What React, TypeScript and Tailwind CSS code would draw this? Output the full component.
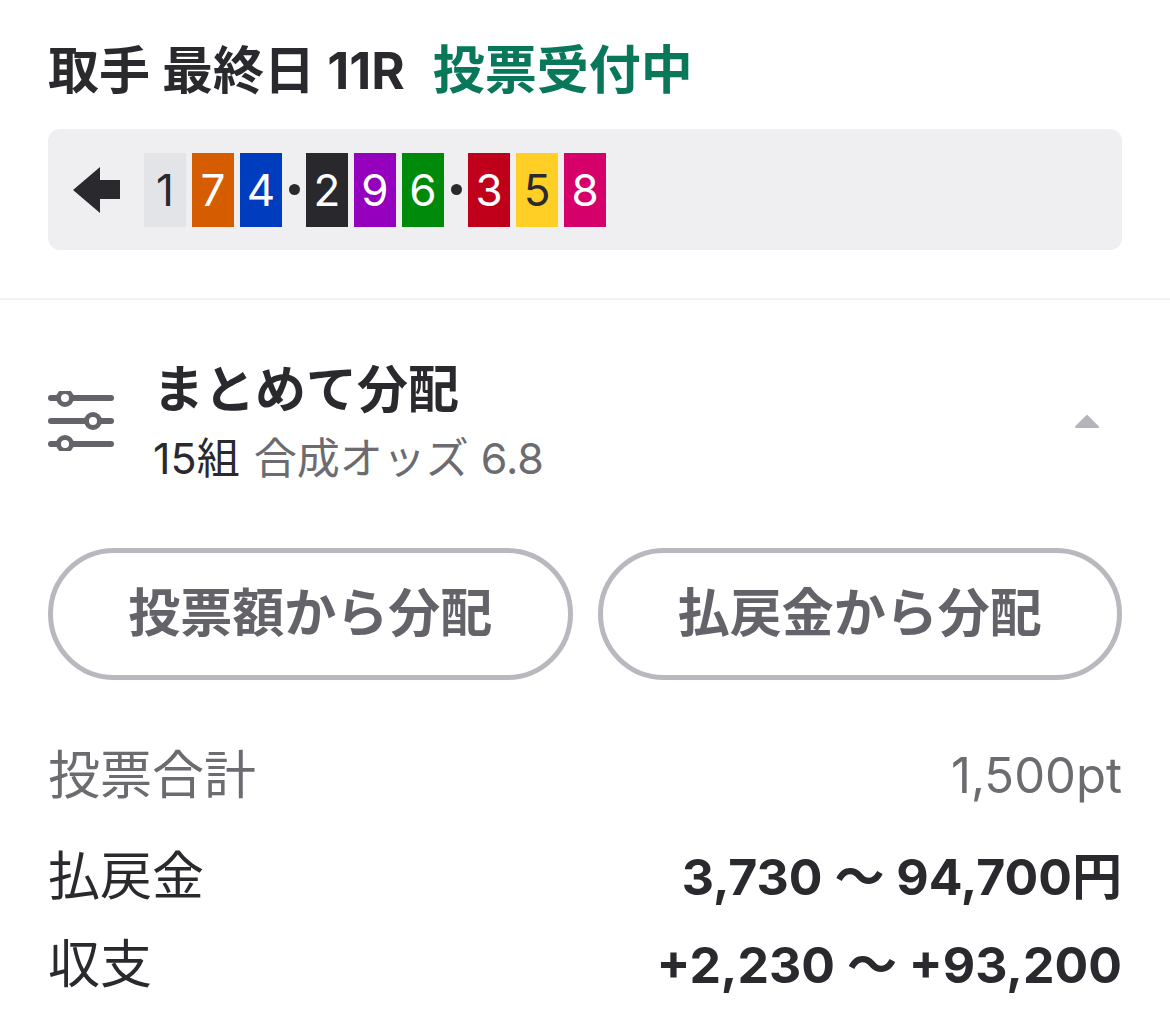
import React from 'react';

type Horse = { n: number; bg: string; fg: string };

const groups: Horse[][] = [
  [
    { n: 1, bg: 'bg-[#e3e4e8]', fg: 'text-[#2a2a2e]' },
    { n: 7, bg: 'bg-[#d65c00]', fg: 'text-white' },
    { n: 4, bg: 'bg-[#003cbe]', fg: 'text-white' },
  ],
  [
    { n: 2, bg: 'bg-[#29292d]', fg: 'text-white' },
    { n: 9, bg: 'bg-[#9400bd]', fg: 'text-white' },
    { n: 6, bg: 'bg-[#008a0b]', fg: 'text-white' },
  ],
  [
    { n: 3, bg: 'bg-[#c0001a]', fg: 'text-white' },
    { n: 5, bg: 'bg-[#ffcf26]', fg: 'text-[#2a2a2e]' },
    { n: 8, bg: 'bg-[#d6006a]', fg: 'text-white' },
  ],
];

function SlidersIcon() {
  return (
    <svg width="66" height="60" viewBox="0 0 66 60" className="shrink-0">
      <g stroke="#636369" strokeWidth="6" strokeLinecap="round" fill="none">
        <line x1="3" y1="7" x2="63" y2="7" />
        <line x1="3" y1="30" x2="63" y2="30" />
        <line x1="3" y1="53" x2="63" y2="53" />
      </g>
      <g stroke="#636369" strokeWidth="5" fill="#fff">
        <circle cx="17" cy="7" r="6.5" />
        <circle cx="45" cy="30" r="6.5" />
        <circle cx="17" cy="53" r="6.5" />
      </g>
    </svg>
  );
}

export default function App() {
  const font = { fontFamily: 'Inter, "Noto Sans CJK JP", sans-serif' };
  return (
    <div className="w-[1170px] min-h-[1025px] bg-white text-[#2a2a2e]" style={font}>
      {/* Race header */}
      <div className="px-[48px] pt-[39px]">
        <div className="flex items-center font-bold leading-[64px]">
          <span className="text-[51px]">取手 最終日 11R</span>
          <span className="ml-[28px] text-[52px] text-[#08775a]">投票受付中</span>
        </div>

        <div className="mt-[26px] h-[121px] rounded-[12px] bg-[#efeff2] px-[25px] flex items-center">
          <svg width="47" height="46" viewBox="0 0 47 46" className="shrink-0">
            <path d="M0 23 L27 0 L27 13 L47 13 L47 32 L27 32 L27 46 Z" fill="#2a2a2e" />
          </svg>
          <div className="ml-[24px] flex items-center">
            {groups.map((g, gi) => (
              <React.Fragment key={gi}>
                {gi > 0 && (
                  <div className="w-[24px] flex items-center justify-center">
                    <span className="w-[11px] h-[11px] rounded-full bg-[#2a2a2e]" />
                  </div>
                )}
                <div className="flex gap-[6px]">
                  {g.map(h => (
                    <div
                      key={h.n}
                      className={`w-[42px] h-[74px] flex items-center justify-center text-[44px] font-normal ${h.bg} ${h.fg}`}
                    >
                      {h.n}
                    </div>
                  ))}
                </div>
              </React.Fragment>
            ))}
          </div>
        </div>
      </div>

      <div className="mt-[48px] h-[2px] bg-[#f2f2f4]" />

      {/* Distribution section */}
      <div className="px-[48px] pt-[58px]">
        <div className="flex items-center">
          <SlidersIcon />
          <div className="ml-[39px] flex-1">
            <div className="text-[51px] font-bold leading-[64px]">まとめて分配</div>
            <div className="mt-[10px] text-[43px] leading-[52px]">
              <span>15組</span>
              <span className="ml-[14px] text-[#6b6b70]">合成オッズ 6.8</span>
            </div>
          </div>
          <svg width="26" height="14" viewBox="0 0 26 14" className="mr-[22px] mt-[2px]">
            <path d="M13 1 L24 12 L2 12 Z" fill="#b4b5bb" stroke="#b4b5bb" strokeWidth="2" strokeLinejoin="round" />
          </svg>
        </div>

        <div className="mt-[64px] grid grid-cols-2 gap-[25px]">
          <button className="h-[132px] rounded-full border-[5px] border-[#b8b9bf] bg-white text-[52px] font-bold text-[#636369]">
            投票額から分配
          </button>
          <button className="h-[132px] rounded-full border-[5px] border-[#b8b9bf] bg-white text-[52px] font-bold text-[#636369]">
            払戻金から分配
          </button>
        </div>

        <div className="mt-[64px] flex items-center justify-between leading-[64px] text-[#6b6b70]">
          <span className="text-[52px]">投票合計</span>
          <span className="text-[49px]">1,500pt</span>
        </div>
        <div className="mt-[37px] flex items-center justify-between leading-[64px]">
          <span className="text-[52px]">払戻金</span>
          <span className="text-[50px] font-bold">3,730 〜 94,700円</span>
        </div>
        <div className="mt-[24px] flex items-center justify-between leading-[64px]">
          <span className="text-[52px]">収支</span>
          <span className="text-[50px] font-bold">+2,230 〜 +93,200</span>
        </div>
      </div>
    </div>
  );
}
